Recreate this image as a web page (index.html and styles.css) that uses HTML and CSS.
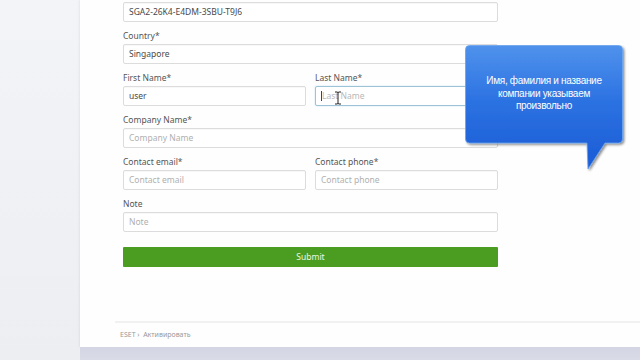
FILE: index.html
```html
<!DOCTYPE html>
<html>
<head>
<meta charset="utf-8">
<link rel="stylesheet" href="styles.css">
</head>
<body>
<div class="page">
  <div class="side"></div>
  <div class="main">
    <div class="panel">
      <form class="form">
        <div class="group">
          <div class="input filled">SGA2-26K4-E4DM-3SBU-T9J6</div>
        </div>
        <div class="group">
          <div class="label">Country*</div>
          <div class="input filled">Singapore</div>
        </div>
        <div class="row">
          <div class="group">
            <div class="label">First Name*</div>
            <div class="input filled">user</div>
          </div>
          <div class="group">
            <div class="label">Last Name*</div>
            <div class="input focus"><span class="caret"></span>Last Name</div>
          </div>
        </div>
        <div class="group">
          <div class="label">Company Name*</div>
          <div class="input">Company Name</div>
        </div>
        <div class="row">
          <div class="group">
            <div class="label">Contact email*</div>
            <div class="input">Contact email</div>
          </div>
          <div class="group">
            <div class="label">Contact phone*</div>
            <div class="input">Contact phone</div>
          </div>
        </div>
        <div class="group">
          <div class="label">Note</div>
          <div class="input">Note</div>
        </div>
        <div class="submit">Submit</div>
      </form>
      <div class="footer">
        <div class="crumbs">ESET ›&nbsp; Активировать</div>
      </div>
    </div>
    <div class="strip"></div>
  </div>
</div>

<svg class="ibeam" width="8" height="14" viewBox="0 0 8 14">
  <path d="M1 1 H3 Q4 1 4 2 V12 Q4 13 3 13 H1 M7 1 H5 Q4 1 4 2 M4 12 Q4 13 5 13 H7" fill="none" stroke="#222" stroke-width="1"/>
</svg>

<div class="bubble">
  <svg class="bubble-shape" width="166" height="132" viewBox="0 0 166 132">
    <defs>
      <linearGradient id="bg" x1="0" y1="0" x2="0" y2="1">
        <stop offset="0" stop-color="#4f92ec"/>
        <stop offset="0.45" stop-color="#2c72e2"/>
        <stop offset="1" stop-color="#1a5bd6"/>
      </linearGradient>
      <filter id="sh" x="-10%" y="-10%" width="130%" height="130%">
        <feDropShadow dx="1.5" dy="1.5" stdDeviation="1.2" flood-color="#000" flood-opacity="0.45"/>
      </filter>
    </defs>
    <path d="M4.5 0.5 H153.5 Q157.5 0.5 157.5 4.5 V94 Q157.5 98 153.5 98 H140 L123 124 L122 98 H4.5 Q0.5 98 0.5 94 V4.5 Q0.5 0.5 4.5 0.5 Z" fill="url(#bg)" stroke="#6aa3ee" stroke-width="0.8" filter="url(#sh)"/>
  </svg>
  <div class="bubble-text">Имя, фамилия и название<br>компании указываем<br>произвольно</div>
</div>
</body>
</html>
```

FILE: styles.css
```css
html, body {
  margin: 0;
  padding: 0;
}
body {
  width: 640px;
  height: 360px;
  overflow: hidden;
  font-family: "Noto Sans", "Open Sans", sans-serif;
  position: relative;
}
.page {
  display: flex;
  height: 360px;
}
.side {
  width: 80px;
  flex: none;
  background: linear-gradient(180deg, #f3f4f7 0%, #eceef2 100%);
}
.main {
  flex: 1;
  display: flex;
  flex-direction: column;
}
.panel {
  height: 347px;
  background: #fefefe;
  display: flex;
  flex-direction: column;
  box-shadow: -1px 0 2px rgba(0,0,0,0.06);
}
.strip {
  flex: 1;
  background: linear-gradient(180deg, #d3d6e2 0%, #d9dce7 100%);
}
.form {
  width: 375px;
  margin: 2px 0 0 43px;
  display: flex;
  flex-direction: column;
  gap: 8px;
}
.row {
  display: flex;
  gap: 9px;
}
.row .group {
  flex: 1;
}
.group {
  display: flex;
  flex-direction: column;
}
.label {
  font-size: 8.5px;
  line-height: 12px;
  height: 12px;
  margin-bottom: 2px;
  color: #555;
}
.input {
  height: 20px;
  box-sizing: border-box;
  border: 1px solid #dcdcdc;
  border-radius: 2px;
  padding: 0 5px;
  font-size: 8.5px;
  line-height: 18px;
  color: #b0b0b0;
  background: #fff;
  box-shadow: inset 0 1px 1px rgba(0,0,0,0.03);
  display: flex;
  align-items: center;
}
.input.filled {
  color: #4a4a4a;
}
.input.focus {
  border-color: #9cc3d6;
  box-shadow: 0 0 2px rgba(102,175,233,0.35);
  color: #b8b8b8;
}
.caret {
  display: inline-block;
  width: 1px;
  height: 10px;
  background: #444;
}
.submit {
  margin-top: 7px;
  height: 20px;
  background: #4b9d22;
  border-radius: 1px;
  color: #eaf7e0;
  font-size: 8.5px;
  line-height: 20px;
  text-align: center;
}
.footer {
  margin-top: auto;
  margin-left: 35px;
  height: 22px;
  margin-bottom: 2px;
  border-top: 2px solid #f1f1f1;
  display: flex;
  align-items: center;
  padding-left: 5px;
}
.crumbs {
  font-size: 7px;
  color: #999;
}
.ibeam {
  position: absolute;
  left: 334px;
  top: 91px;
}
.bubble {
  position: absolute;
  left: 465px;
  top: 45px;
  width: 166px;
  height: 132px;
}
.bubble-shape {
  position: absolute;
  left: 0;
  top: 0;
}
.bubble-text {
  position: absolute;
  left: 0;
  top: 0;
  width: 158px;
  height: 98px;
  display: flex;
  align-items: center;
  justify-content: center;
  text-align: center;
  font-family: "Liberation Sans", Arial, sans-serif;
  font-size: 10px;
  letter-spacing: -0.3px;
  line-height: 12.5px;
  color: #fff;
}
```
